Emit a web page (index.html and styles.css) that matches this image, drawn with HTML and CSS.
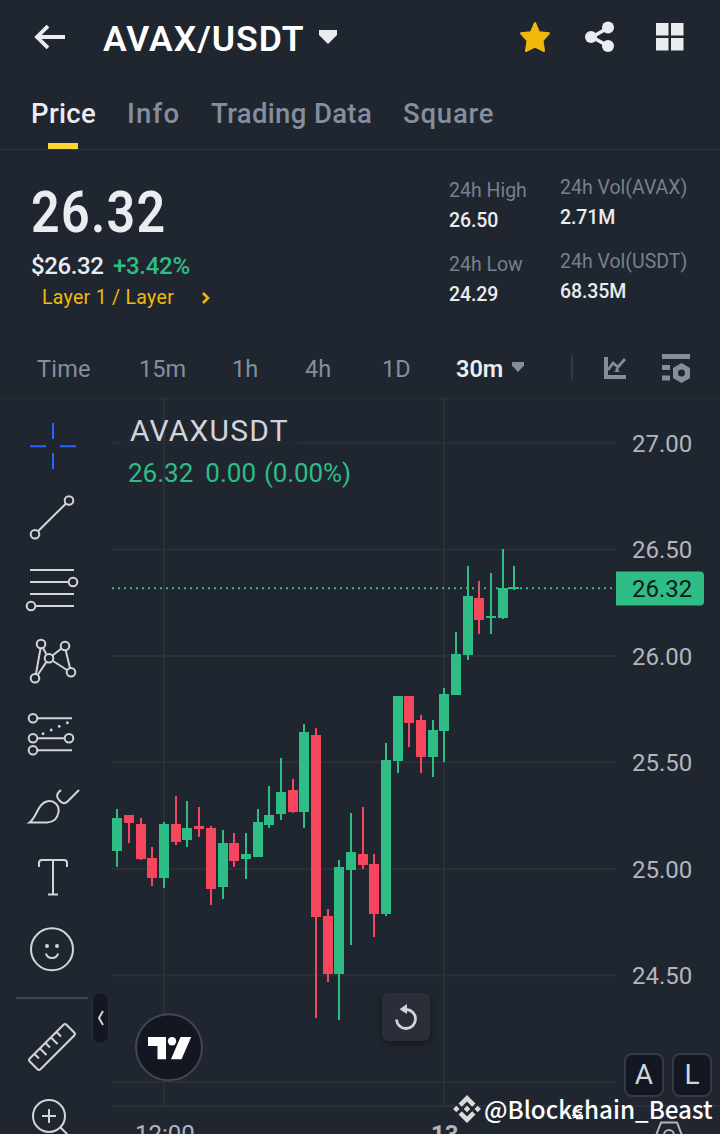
FILE: index.html
```html
<!DOCTYPE html>
<html lang="en">
<head>
<meta charset="utf-8">
<title>AVAX/USDT</title>
<link rel="stylesheet" href="styles.css">
</head>
<body>
<main class="app">
  <header class="topbar">
    <svg class="back" width="32" height="26" viewBox="0 0 32 26" fill="none" stroke="#eaecef" stroke-width="3.8"><path d="M31 13H3M14 2.2L3 13l11 10.800"/></svg>
    <h1 class="pair">AVAX/USDT</h1>
    <svg class="pair-caret" width="18" height="14" viewBox="0 0 18 14" fill="#eaecef"><path d="M0 0h18v5l-9 9-9-9z"/></svg>
    <svg class="star" width="32" height="32" viewBox="0 0 32 32" fill="#f0b90b" stroke="#f0b90b" stroke-width="2" stroke-linejoin="round"><path d="M16 2l4 9.200 10 1.100-6.500 7.200L25 30l-9-4.300L7 30l1.500-10.500L2 12.300l10-1.100z"/></svg>
    <svg class="share" width="30" height="32" viewBox="0 0 30 32" fill="#eaecef"><path d="M23 7L7 16l16 9" fill="none" stroke="#eaecef" stroke-width="3.600"/><circle cx="6" cy="16" r="6"/><circle cx="23" cy="6.500" r="6"/><circle cx="23" cy="25" r="6"/></svg>
    <svg class="apps" width="28" height="28" viewBox="0 0 28 28" fill="#eaecef"><path d="M0 0h12.500v12.500H0zM15 0h12.500v12.500H15zM0 15h12.500v12.500H0zM15 15h12.500v12.500H15z"/></svg>
  </header>

  <nav class="tabs">
    <a class="tab tab-price">Price</a>
    <a class="tab tab-info">Info</a>
    <a class="tab tab-data">Trading Data</a>
    <a class="tab tab-square">Square</a>
  </nav>

  <section class="summary">
    <div class="quote">
      <div class="last">26.32</div>
      <div class="change"><span class="usd">$26.32</span><span class="pct">+3.42%</span></div>
      <div class="tag"><span>Layer 1 / Layer</span><svg width="8" height="12" viewBox="0 0 8 12" fill="none" stroke="#f0b90b" stroke-width="2.600"><path d="M1 1l5 5-5 5"/></svg></div>
    </div>
    <dl class="stats stats-price">
      <dt>24h High</dt><dd>26.50</dd>
      <dt>24h Low</dt><dd>24.29</dd>
    </dl>
    <dl class="stats stats-volume">
      <dt>24h Vol(AVAX)</dt><dd>2.71M</dd>
      <dt>24h Vol(USDT)</dt><dd>68.35M</dd>
    </dl>
  </section>

  <nav class="intervals">
    <a class="i-time">Time</a><a class="i-15">15m</a><a class="i-1h">1h</a><a class="i-4h">4h</a><a class="i-1d">1D</a><a class="i-30">30m</a>
    <svg class="i-caret" width="12" height="10" viewBox="0 0 12 10" fill="#848e9c"><path d="M0 0h12v3.500L6 10 0 3.500z"/></svg>
    <span class="split"></span>
    <svg class="i-chart" width="22" height="24" viewBox="0 0 22 24"><path d="M2 1v20h20" fill="none" stroke="#848e9c" stroke-width="4"/><path d="M4 14l5-7 5 4 7-8" fill="none" stroke="#848e9c" stroke-width="2.800"/><path d="M13 11.500l2 2-1.200 1.200L17 16H9l3.200-1.300L11 13.500z" fill="#848e9c"/></svg>
    <svg class="i-set" width="28" height="30" viewBox="0 0 28 30" fill="#848e9c"><path d="M0 0h28v5H0zM0 11h8v5H0zM0 21.500h8v5H0z"/><path fill-rule="evenodd" d="M19.500 9l8.500 5v10l-8.500 5-8.500-5V14zM19.500 15.500a3.500 3.500 0 100 7 3.500 3.500 0 100-7z"/></svg>
  </nav>

  <section class="workspace">
    <aside class="tools">
      <svg class="tool" viewBox="0 0 112 72"><path d="M53 13v16M53 43v16M30 36.300h16M60 36.300h16" stroke="#2962ff"/></svg>
      <svg class="tool" viewBox="0 0 112 72"><circle cx="69" cy="18.500" r="4.300"/><circle cx="35" cy="52.300" r="4.300"/><path d="M66 21.500L38 49.300"/></svg>
      <svg class="tool" viewBox="0 0 112 72"><path d="M30 16h44M30 28h38.500M30 40h44M35.500 52H74"/><circle cx="73" cy="28" r="4.300"/><circle cx="31" cy="52" r="4.300"/></svg>
      <svg class="tool" viewBox="0 0 112 72"><circle cx="41" cy="18" r="4.300"/><circle cx="65" cy="20" r="4.300"/><circle cx="49" cy="32.300" r="4.300"/><circle cx="71" cy="46.300" r="4.300"/><circle cx="35" cy="52.300" r="4.300"/><path d="M40.500 22.300L36 48M43 22l3.500 6.500M52.500 29.500l9-7M65.700 24.300L70 42M53 35l14 9M46.300 36L38 48.500"/></svg>
      <svg class="tool" viewBox="0 0 112 72"><circle cx="33" cy="20.300" r="4.300"/><circle cx="33" cy="40.300" r="4.300"/><circle cx="69" cy="40.300" r="4.300"/><circle cx="33" cy="52.300" r="4.300"/><path d="M37.300 20.300H72M37.300 40.300h27.400M37.300 52.300H72"/><path d="M43 35.700L69 24" stroke-width="2.800" stroke-linecap="round" stroke-dasharray=".1 8.800"/></svg>
      <svg class="tool" viewBox="0 0 112 72"><path d="M29.500 52.500c7-5 9-20 18-21.300 7-1 12 4 11 11-1 6-5 10-11 10.300zM61 20c-5 4-5 7-1.500 10.500 3 3.500 5.500 3.500 8 1L79 20"/></svg>
      <svg class="tool" viewBox="0 0 112 72"><path d="M39 25v-4q0-3 3-3h22q3 0 3 3v4M53 18v34.500M48 52.500h10"/></svg>
      <svg class="tool" viewBox="0 0 112 72"><circle cx="52" cy="35.300" r="21"/><circle cx="47" cy="32" r="2" class="eye"/><circle cx="57" cy="32" r="2" class="eye"/><path d="M46 39.500c1.500 6 10.500 6 12 0"/></svg>
      <hr class="tool-split">
      <svg class="tool" viewBox="0 0 112 72"><path d="M63.500 13.800q1.500-1.500 3 0l7.700 7.700q1.500 1.500 0 3L40.500 58.200q-1.500 1.500-3 0l-7.700-7.700q-1.500-1.500 0-3zM35 43.500l4 4M40.500 38l6 6M46 32.500l4 4M51.500 27l6 6M57 21.500l4 4"/></svg>
      <svg class="tool" viewBox="0 0 112 72"><circle cx="49" cy="33" r="16"/><path d="M42 33h14M49 26v14M60 44l12 12"/></svg>
      <button class="collapse"><svg width="8" height="16" viewBox="0 0 8 16" fill="none" stroke="#d1d4dc" stroke-width="2"><path d="M6 1L2 8l4 7"/></svg></button>
    </aside>

    <div class="chart">
      <svg class="plot" width="608" height="737" viewBox="112 397 608 737">
        <path class="grid" d="M112 443.300h8M297 443.300h319M112 549.500h504M112 656h504M112 762.300h504M112 869h504M112 975.300h504M112 1082h504M112 1106h608M164 397v709M444 397v709"/>
        <path class="grid" d="M120 443.300h177" opacity=".4"/>
        <g id="candles"></g>
        <path d="M112 588.300h504" stroke="#2ebd85" stroke-width="2" stroke-dasharray="2 4"/>
        <path d="M616 571.500h84q4 0 4 4v26q0 4-4 4h-84z" fill="#2ebd85"/>
        <g class="axis">
          <text x="632" y="452">27.00</text><text x="632" y="558">26.50</text><text x="632" y="665">26.00</text>
          <text x="632" y="771">25.50</text><text x="632" y="878">25.00</text><text x="632" y="984">24.50</text>
          <text x="632" y="597" class="now">26.32</text>
          <text x="135" y="1142">12:00</text><text x="431" y="1142" class="day">13</text>
        </g>
        <path d="M655 1138l6-15.500h16l6 15.500" fill="none" stroke="#b2b5be" stroke-width="2"/><circle cx="669" cy="1135" r="5" fill="none" stroke="#b2b5be" stroke-width="2"/>
        <circle cx="169" cy="1047.300" r="33" fill="#131722" stroke="#434651" stroke-width="2"/>
        <path d="M148 1037h18v22.300h-8.500V1046H148zM180.500 1037h10.700l-9.700 22.300H171z" fill="#fff"/><circle cx="172" cy="1041.300" r="4.200" fill="#fff"/>
      </svg>
      <div class="legend">
        <div class="symbol">AVAXUSDT</div>
        <div class="values"><span>26.32</span><span>0.00</span><span>(0.00%)</span></div>
      </div>
      <button class="reset"><svg width="24" height="28" viewBox="0 0 24 28"><path d="M2.500 15.500a9.500 9.500 0 1010-10" fill="none" stroke="#d1d4dc" stroke-width="2.800"/><path d="M5.500 5.300L13 0v10z" fill="#d1d4dc"/></svg></button>
      <div class="scales"><button>A</button><button>L</button></div>
    </div>
  </section>

  <div class="credit">
    <svg width="28" height="28" viewBox="0 0 28 28" fill="#d9d9d9"><path d="M14 0l8.500 8.500-3.300 3.300L14 6.600l-5.200 5.200-3.300-3.300zM14 28l-8.500-8.500 3.300-3.300 5.200 5.200 5.200-5.200 3.300 3.300zM0 14l3.300-3.300L6.600 14l-3.300 3.300zM21.400 14l3.300-3.300L28 14l-3.300 3.300zM10.700 14l3.300-3.300 3.300 3.300-3.300 3.300z"/></svg>
    <span>@Blockchain_Beast</span>
    <svg class="mark" width="12" height="12" viewBox="0 0 12 12" fill="none" stroke="#fff" stroke-width="1.300"><path d="M10 1L2 3l8 2M1 10l8-4M0 7.500h11M4 10.500h7"/></svg>
  </div>
</main>
<script src="chart.js"></script>
</body>
</html>
```
FILE: styles.css
```css
* { box-sizing: border-box; }
body { margin: 0; background: #202630; color: #eaecef; font-family: Roboto, "Noto Sans", sans-serif; }
svg { display: block; flex: none; }
button { padding: 0; font: inherit; color: inherit; }
.app { position: relative; width: 720px; height: 1134px; overflow: hidden; white-space: nowrap; }

.topbar { display: flex; align-items: center; height: 75px; padding: 0 0 1px 34px; }
.pair { width: 200px; margin: 4px 0 0 37px; font-size: 35.5px; line-height: 44px; font-weight: 600; color: #fff; letter-spacing: 1px; }
.pair-caret { margin-left: 16px; }
.star { margin-left: 182px; }
.share { margin-left: 34px; }
.apps { margin-left: 41px; }

.tabs { display: flex; height: 75px; padding-left: 31px; border-bottom: 1px solid #2f3641; }
.tab { position: relative; padding-top: 22px; font-size: 27.5px; line-height: 34px; font-weight: 500; color: #848e9c; letter-spacing: .35px; }
.tab-price { width: 96px; color: #eaecef; }
.tab-price::after { content: ""; position: absolute; left: 17px; bottom: 0; width: 30px; height: 6px; background: #fcd535; }
.tab-info { width: 84px; letter-spacing: 1.2px; }
.tab-data { width: 192px; }
.tab-square { letter-spacing: .8px; }

.summary { display: flex; height: 190px; }
.quote { width: 450px; padding: 30px 0 0 31px; }
.last { width: 146px; font-size: 57px; line-height: 66px; font-weight: 600; letter-spacing: 1.5px; transform: scaleX(.88); transform-origin: 0 50%; }
.change { display: flex; font-size: 24px; line-height: 30px; margin-top: 5px; font-weight: 500; letter-spacing: -.3px; }
.usd { width: 82px; letter-spacing: -.4px; }
.pct { color: #2ebd85; }
.tag { display: flex; align-items: center; justify-content: space-between; width: 168px; margin: 3px 0 0 11px; font-size: 19.5px; line-height: 28px; color: #f0b90b; letter-spacing: .3px; }
.stats { margin: 0; font-size: 19.5px; line-height: 29px; }
.stats-price { width: 111px; padding-top: 26px; margin-left: -1px; }
.stats-volume { padding-top: 23px; }
.stats dt { color: #76808f; }
.stats dd { margin: 0 0 15px; padding-top: 1px; font-weight: 500; letter-spacing: -.1px; }

.intervals { display: flex; align-items: center; height: 57px; padding: 0 0 0 37px; font-size: 23.5px; line-height: 58px; color: #848e9c; }
.i-time { width: 102px; letter-spacing: .2px; }
.i-15 { width: 93px; }
.i-1h { width: 73px; }
.i-4h { width: 77px; }
.i-1d { width: 74px; }
.i-30 { width: 56px; font-weight: 600; color: #eaecef; }
.i-caret { margin-top: -3px; }
.split { width: 2px; height: 25px; margin: -3px 0 0 47px; background: #343943; }
.i-chart { margin: -2px 0 0 31px; }
.i-set { margin-left: 36px; }

.workspace { display: grid; grid-template-columns: 112px 608px; height: 737px; border-top: 3px solid #262b34; }
.tools { position: relative; padding-top: 10px; }
.tool { width: 112px; height: 72px; fill: none; stroke: #d1d4dc; stroke-width: 2; }
.eye { fill: #d1d4dc; stroke: none; }
.tool-split { width: 72px; height: 2px; margin: 11px 0 12px 16px; border: 0; background: #434651; }
.collapse { position: absolute; left: 92px; top: 592px; display: grid; place-items: center; width: 17px; height: 52px; background: #131722; border: 1px solid #2a2e39; border-radius: 9px; }

.chart { position: relative; }
.plot { margin-top: -3px; }
.grid { stroke: #2b2f38; stroke-width: 2; fill: none; }
.up { fill: #2ebd85; }
.down { fill: #f6465d; }
.axis { fill: #b2b5be; font-size: 24px; }
.now { fill: #131722; }
.day { font-weight: 700; }
.legend { position: absolute; left: 17px; top: 13px; color: #2ebd85; }
.symbol { padding-left: 1px; font-size: 30px; line-height: 36px; color: #d1d4dc; letter-spacing: 1.2px; }
.values { display: flex; gap: 12px; margin: 7px 0 0 -1px; font-size: 26px; line-height: 34px; }
.values span:last-child { margin-left: -4px; letter-spacing: -.1px; }
.reset { position: absolute; left: 270px; top: 593px; display: grid; place-items: center; width: 48px; height: 48px; padding-top: 2px; border: 0; border-radius: 6px; background: #2a2e39; box-shadow: 0 3px 8px rgba(0,0,0,.4); }
.scales { position: absolute; left: 512px; top: 653px; display: flex; gap: 8px; }
.scales button { width: 40px; height: 44px; border: 2px solid #363a45; border-radius: 8px; background: #131722; color: #d1d4dc; font-size: 28px; line-height: 40px; }

.credit { position: absolute; left: 453px; top: 1090px; display: flex; align-items: center; gap: 3px; height: 38px; font: 500 24.2px/38px "Noto Sans CJK SC", "Noto Sans", sans-serif; color: #fff; }
.mark { position: absolute; left: 119px; top: 18px; }
```
FILE: chart.js
```js
// x, body top, body bottom, wick top, wick bottom, direction
const candles = [
  [112,818,851,809,867,1],[124,815,823,815,843,0],[136,824,859,818,860,0],[147,858,878,847,886,0],
  [159,824,878,822,888,1],[171,824,842,796,845,0],[182,828,840,801,847,1],[194,826,829,807,837,0],
  [206,828,889,826,905,0],[218,843,887,830,899,1],[229,843,861,833,867,0],[241,854,859,833,879,1],
  [253,822,857,809,857,1],[264,815,825,786,828,1],[276,792,814,758,820,1],[288,790,812,779,813,0],
  [299,732,812,724,828,1],[311,735,917,728,1018,0],[323,916,974,909,982,0],[334,867,974,860,1020,1],
  [346,852,870,813,945,1],[358,854,865,807,869,0],[369,864,914,854,937,0],[381,760,914,743,916,1],
  [393,696,761,696,773,1],[404,696,723,696,747,0],[416,720,757,715,773,0],[428,730,757,720,777,1],
  [439,694,731,688,762,1],[451,654,695,632,695,1],[463,596,655,566,660,1],[474,598,620,581,634,0],
  [486,616,618,573,634,1],[498,588,618,549,619,1],[509,587,589,566,590,1]
];
document.getElementById("candles").innerHTML = candles.map(([x, top, bottom, high, low, up]) =>
  `<path class="${up ? "up" : "down"}" d="M${x} ${top}h10v${bottom - top}h-10zM${x + 4} ${high}h2v${low - high}h-2z"/>`
).join("");
```
